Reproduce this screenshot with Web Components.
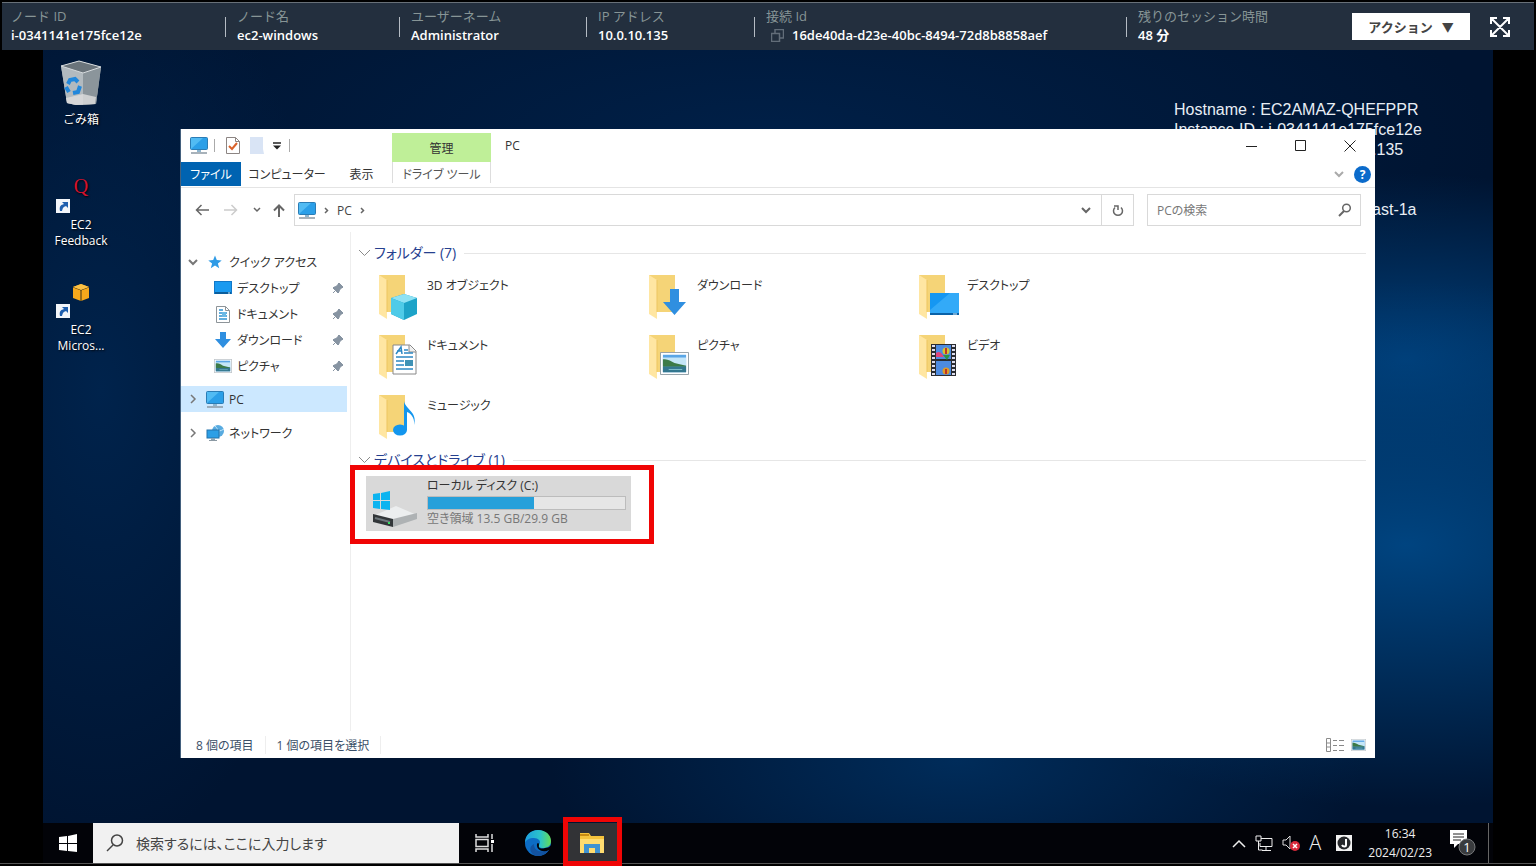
<!DOCTYPE html>
<html lang="ja">
<head>
<meta charset="utf-8">
<title>Fleet Manager - Remote Desktop</title>
<style>
    html, body { height: 100%; margin: 0; }
    body {
        background: #000;
        font-family: "Open Sans", "Noto Sans CJK JP", sans-serif;
        overflow: hidden;
    }
</style>
</head>
<body>
<remote-session>
    <session-bar slot="bar">
        <session-field label="ノード ID" style="flex-grow:214">i-0341141e175fce12e</session-field>
        <session-field label="ノード名" style="flex-grow:174">ec2-windows</session-field>
        <session-field label="ユーザーネーム" style="flex-grow:187">Administrator</session-field>
        <session-field label="IP アドレス" style="flex-grow:168">10.0.10.135</session-field>
        <session-field label="接続 Id" copy style="flex-grow:372">16de40da-d23e-40bc-8494-72d8b8858aef</session-field>
        <session-field label="残りのセッション時間" style="flex-grow:226">48 分</session-field>
    </session-bar>
    <desktop-area>
        <desktop-shortcut slot="icons" icon="recycle">ごみ箱</desktop-shortcut>
        <desktop-shortcut slot="icons" icon="feedback" linked>EC2 Feedback</desktop-shortcut>
        <desktop-shortcut slot="icons" icon="box" linked>EC2 Micros...</desktop-shortcut>
        <host-info slot="info"></host-info>
        <explorer-window slot="window"></explorer-window>
    </desktop-area>
    <task-bar slot="taskbar"></task-bar>
</remote-session>

<script>
// each entry: width, height, svg body
const PC = `<rect x=".5" y=".5" width="17" height="12" rx="1" fill="#2b9fe8" stroke="#2a7cb5"/>
    <path d="M1 12 13 1H1z" fill="#63c7f8" opacity=".7"/><path d="M7 13h4v2H7z" fill="#8fb6cf"/>
    <path d="M1 16h16" stroke="#8b99a3" stroke-width="1.5"/>`
const FOLDER = `<path d="M1 1h26v37H9z" fill="#f5d477"/><path d="M1 1l8 5v39l-8-5z" fill="#ffe6a2"/>
    <path d="M9 6v32" stroke="#edc560"/>`
const PICTURE = (x, y, w, h) => `<svg x="${x}" y="${y}" width="${w}" height="${h}" viewBox="0 0 30 25" preserveAspectRatio="none">
    <path d="M.5.5h29v24H.5z" fill="#fff" stroke="#8e9ba3"/><path d="M3 3h24v19H3z" fill="#5aa6e6"/>
    <path d="M3 6h24v9H3z" fill="#c4e6f8"/><path d="M3 8c5-1 8 2 12 4l12 3v1H3z" fill="#3c7a47"/><path d="M3 16h24v6H3z" fill="#33778f"/>
    <path d="M9 19h14" stroke="#83c1cf"/></svg>`

const ICONS = {
    pc: [18, 17, PC],
    star: [14, 14, `<path d="m7 .5 1.8 4.6 4.9.3-3.8 3 1.3 4.9L7 10.6l-4.2 2.7 1.3-4.9-3.8-3 4.9-.3z" fill="#2f9be6"/>`],
    desktop: [18, 14, `<rect x=".5" y=".5" width="17" height="12" fill="#1a9af0" stroke="#1278c8"/><path d="M1 12h16" stroke="#0b5e9c" stroke-width="2"/><path d="M14 12h2" stroke="#d5ecfb"/>`],
    document: [14, 17, `<path d="M.5.5h9l4 4v12H.5z" fill="#fff" stroke="#8d9499"/><path d="M9.500.5v4h4" fill="none" stroke="#8d9499"/>
        <path d="M3 4h4M3 7h8M3 10h8M3 13h8" stroke="#2e92d2" stroke-width="1.5"/><path d="M6 6h4v5H6z" fill="#6bb9e5"/>`],
    download: [18, 18, `<path d="M6 1h6v7h5l-8 9-8-9h5z" fill="#2f8fe0"/>`],
    picture: [18, 14, PICTURE(0, 0, 18, 14)],
    view: [15, 12, PICTURE(0, 0, 15, 12)],
    network: [19, 18, `<circle cx="12" cy="7" r="6" fill="#58abe0"/><path d="M9 2c3 3 5 7 3 11M7 7c4 1 8 0 11-2" fill="none" stroke="#c2e6fa"/>
        <rect x="1" y="6" width="12" height="8" fill="#2c9fe6" stroke="#2373ab"/><path d="M5 14h4v2H5z" fill="#8aa6b8"/><path d="M3 16.500h8" stroke="#8b99a3"/>`],
    pin: [12, 12, `<path d="m7 1 4 4-1 1-1 0-2 3 0 1-1 1-5-5 1-1 1 0 3-2 0-1zM3.500 8.500 1 11" fill="#8794a2" stroke="#8794a2"/>`],
    chevDown: [10, 7, `<path d="m1 1 4 4 4-4" fill="none" stroke="currentColor" stroke-width="2"/>`],
    chevTiny: [8, 6, `<path d="m1 1 3 3 3-3" fill="none" stroke="currentColor" stroke-width="1.5"/>`],
    chevRight: [7, 10, `<path d="m1 1 4 4-4 4" fill="none" stroke="currentColor" stroke-width="1.5"/>`],
    chevSmall: [5, 7, `<path d="m1 1 2.500 2.500L1 6" fill="none" stroke="currentColor" stroke-width="1.5"/>`],
    chevHead: [13, 8, `<path d="m1 1 5.500 5.500L12 1" fill="none" stroke="currentColor"/>`],
    chevUp: [14, 9, `<path d="m1 8 6-6 6 6" fill="none" stroke="currentColor" stroke-width="1.5"/>`],
    check: [14, 17, `<path d="M.5.5h9l4 4v12H.5z" fill="#fff" stroke="#8c8583"/><path d="M9.500.5v4h4" fill="none" stroke="#8c8583"/><path d="m3 9 3 3 5-6" fill="none" stroke="#d9622b" stroke-width="2"/>`],
    blank: [14, 17, `<path d="M0 0h13v12l1 5H0z" fill="#d9e4f5"/>`],
    custom: [8, 8, `<path d="M0 1h8" stroke="#222" stroke-width="1.5"/><path d="M0 3.500h8l-4 4z" fill="#222"/>`],
    back: [14, 12, `<path d="M14 6H1.500M6.500 1l-5 5 5 5" fill="none" stroke="currentColor" stroke-width="1.500"/>`],
    forward: [14, 12, `<path d="M0 6h12.500M7.500 1l5 5-5 5" fill="none" stroke="currentColor" stroke-width="1.500"/>`],
    up: [12, 13, `<path d="M6 13V1.500M1 6.500l5-5 5 5" fill="none" stroke="currentColor" stroke-width="2"/>`],
    refresh: [12, 13, `<path d="M3 3.500A4.500 4.500 0 1 0 9 3.500M2 2h4v4" fill="none" stroke="#666" stroke-width="1.500"/>`],
    search: [14, 14, `<circle cx="8.500" cy="5" r="3.800" fill="none" stroke="currentColor" stroke-width="1.500"/><path d="M6 8 1 13" stroke="currentColor" stroke-width="2"/>`],
    searchBig: [18, 18, `<circle cx="11" cy="6.500" r="5.500" fill="none" stroke="currentColor" stroke-width="1.500"/><path d="M7 11 1 17" stroke="currentColor" stroke-width="1.500"/>`],
    min: [12, 12, `<path d="M0 6.500h11" stroke="#222"/>`],
    max: [12, 12, `<path d="M.5.5h10v10H.5z" fill="none" stroke="#222"/>`],
    close: [12, 12, `<path d="m.5.5 11 11m0-11-11 11" stroke="#222"/>`],
    details: [18, 14, `<path d="M.5.5h4v13h-4zM0 5h5M0 9h5" fill="none" stroke="#8b8b8b"/><path d="M7 2.500h4m2 0h5M7 7.500h4m2 0h5M7 12.500h4m2 0h5" stroke="#888"/>`],
    copy: [13, 13, `<path d="M.5 4.500h8v8h-8zM4 4V.5h8.500V9H9" fill="none" stroke="#626d79" stroke-width="1.500"/>`],
    expand: [20, 20, `<path d="m2 2 16 16m0-16L2 18M7 1H1v6M13 1h6v6M7 19H1v-6M13 19h6v-6" fill="none" stroke="#fff" stroke-width="2"/>`],

    f3d: [46, 46, FOLDER + `<path d="m13 24 13-4 13 4v16l-13 6-13-6z" fill="#1da3c8"/><path d="m13 24 13-4 13 4-13 5z" fill="#8fe2f4"/><path d="M13 24v16l13 6V29z" fill="#4fcbe8"/>`],
    fdownload: [46, 46, FOLDER + `<path d="M22 15h9v13h7L26.500 41 15 28h7z" fill="#2f8fe0"/>`],
    fdesktop: [46, 46, FOLDER + `<path d="M12 19h29v22H12z" fill="#1597f2"/><path d="M12 36 32 19h9v22H12z" fill="#33aaf8"/><path d="M12 40h29" stroke="#0a62a8" stroke-width="2"/><path d="M35 40h4" stroke="#d5ecfb"/>`],
    fdocument: [46, 46, FOLDER + `<path d="M15 11h17l6 6v23H15z" fill="#fff" stroke="#888"/><path d="M31 11v7h7" fill="#eee" stroke="#888"/>
        <path d="m18 20 5-7 1 7m-5-3h5M26 16h4M26 19h9M18 23h17M18 27h8M18 31h8M18 35h17" fill="none" stroke="#2c88c4" stroke-width="1.500"/><path d="M27 26h8v6h-8z" fill="#3f92b5"/>`],
    fpicture: [46, 46, FOLDER + PICTURE(12, 18, 29, 23)],
    fvideo: [46, 46, FOLDER + `<path d="M13 10h25v32H13z" fill="#2a2c31"/><path d="M18 11h15v14H18zM18 27h15v14H18z" fill="#4d8be0"/>
        <path d="M15.500 11v31M35.500 11v31" stroke="#dde" stroke-width="3" stroke-dasharray="2 2"/><circle cx="28" cy="17" r="3.500" fill="#d8c32c"/><path d="M18 19c4-3 6 1 8 4h-8z" fill="#e0457c"/>
        <path d="M25 21h7l-3 5z" fill="#2c9445"/><circle cx="28" cy="37" r="3.500" fill="#dd9b26"/><path d="M27 14h2v6h-2zM27 35h2v5h-2z" fill="#bd3326"/>`],
    fmusic: [46, 46, FOLDER + `<ellipse cx="22" cy="36" rx="7" ry="5.500" fill="#1396ee"/><path d="M26 36V7c1 8 14 11 10 24 1-8-4-12-7-13v18z" fill="#1396ee"/>`],
    drive: [46, 38, `<path d="m1 26 23-10 21 9-24 11z" fill="#eceeef"/><path d="m21 29 24-6v6L21 37z" fill="#aeb2b4"/><path d="m1 24 20 5v8L1 32z" fill="#323639"/><path d="m3 28 15 4" stroke="#6d777c" stroke-width="2"/><path d="M16 32h2v2h-2z" fill="#34df62"/>
        <path d="m1 4 7-1v7H1zM9 3l9-2v9H9zM1 11h7v8l-7-1zM9 11h9v9l-9-1z" fill="#0db4f0"/>`],

    recycle: [42, 46, `<path d="m1 6 18-5 22 6-5 37-20 1-9-2z" fill="#a4adb3"/><path d="m1 6 22 7v32l-7 0-9-2z" fill="#b2babf"/><path d="m23 13 18-6-5 37-13 1z" fill="#8b959b"/>
        <path d="m1 6 18-5 22 6-18 6z" fill="#6a747b" stroke="#d5dadd"/><path d="m6 38 17-4 13 3-1 7-19 1-9-2z" fill="#dedede" opacity=".8"/>
        <path d="m8 24 2-4 5-1 3 3M20 26l-2 6-5 1M9 32l-3-5" fill="none" stroke="#2187db" stroke-width="4"/>`],
    feedback: [42, 46, `<text x="21" y="28" text-anchor="middle" font-family="Liberation Serif, serif" font-size="20" fill="#d4122e">Q</text>`],
    box: [42, 46, `<path d="m13 17 8-3 8 3v11l-8 3-8-3z" fill="#f6a81b"/><path d="m13 17 8 3 8-3M21 20v11" fill="none" stroke="#3c3219"/><path d="m13 17 8-3 8 3-8 3z" fill="#fbc043"/>`],
    shortcut: [14, 14, `<path d="M0 0h14v14H0z" fill="#f3f6fa"/><path d="M4 12c-1-5 1-6 4-7L6 3h6v6l-2-2c-3 1-3 2-4 5z" fill="#1f5fae"/>`],

    windows: [18, 18, `<path d="m0 3 8-1v7H0zM9 2l9-2v9H9zM0 10h8v7l-8-1zM9 10h9v8l-9-1z" fill="#fff"/>`],
    taskview: [19, 18, `<path d="M1 0v3h12V0M1 18v-3h12v3M1 5.500h12v7H1zM17 0v5m0 5v8" fill="none" stroke="#ddd" stroke-width="1.500"/><path d="M16 6h3v3h-3z" fill="#fff"/>`],
    edge: [26, 26, `<defs><linearGradient id="a" x1="0" x2="1"><stop stop-color="#1c9fe0"/><stop offset=".6" stop-color="#2cc4c8"/><stop offset="1" stop-color="#64dc55"/></linearGradient></defs>
        <circle cx="13" cy="13" r="13" fill="#0c6cc5"/><path d="M0 13C0 5 6 0 13 0c8 0 13 5 13 11 0 5-4 7-8 7-3 0-5-1-4-3 3-4-1-7-5-7-5 0-8 2-9 5z" fill="url(#a)"/>
        <path d="M9 14c0 7 6 9 15 6-3 4-7 6-11 6C6 26 2 17 9 14z" fill="#1252a0"/><path d="M14 15c-1 4 3 4 6 3 3 0 5-1 6-3v4l-2 1c-6 3-13 0-12-6 1-2 2-1 2 1z" fill="#020308"/>`],
    explorer: [24, 22, `<path d="M0 1h9l2 3h13v17H0z" fill="#f5c33c"/><path d="M0 7h24v14H0z" fill="#ffdc70"/><path d="M0 3h9" stroke="#c88b12" stroke-width="2"/>
        <path d="M4 21v-9h16v9h-5v-5H9v5z" fill="#3f93d2"/>`],
    lan: [18, 16, `<path d="M6 3.500h11v8H5V8M11 12v3M7 15.500h9M1 1h5v5H1zM3.500 6v9h4" fill="none" stroke="#eee"/>`],
    sound: [18, 16, `<path d="M1 5h3l4-4v13l-4-4H1z" fill="none" stroke="#ddd"/><circle cx="13" cy="11" r="5" fill="#d9293a"/><path d="m11 9 4 4m0-4-4 4" stroke="#fff" stroke-width="1.500"/>`],
    ime: [16, 16, `<path d="M0 0h16v16H0z" fill="#f2f2f2"/><circle cx="8" cy="8" r="6.500" fill="#26282b"/><path d="M10 4v6c0 2-3 2-4 0" fill="none" stroke="#fff" stroke-width="2"/>`],
    notice: [26, 26, `<path d="M0 0h17v14h-9l-4 4v-4H0z" fill="#fff"/><path d="M3 4h11M3 7h11M3 10h8" stroke="#222"/><circle cx="17" cy="17" r="8" fill="#393b3e" stroke="#77797b"/>
        <text x="17" y="22" text-anchor="middle" font-size="13" fill="#fff">1</text>`]
}

function define(name, build) {
    customElements.define(name, class extends HTMLElement {
        constructor() {
            super()
            this.attachShadow({mode: 'open'})
        }
        connectedCallback() {
            this.shadowRoot.innerHTML = build(this)
        }
    })
}

const BUTTON = 'button{font:inherit;color:inherit;background:none;border:0;padding:0;display:flex;align-items:center;justify-content:center}'

define('ui-icon', el => {
    const [w, h, body] = ICONS[el.getAttribute('name')]
    return `<style>:host{display:inline-flex;flex:none}svg{display:block}</style>
    <svg width="${w}" height="${h}" viewBox="0 0 ${w} ${h}" aria-hidden="true">${body}</svg>`
})

define('remote-session', () => `
<style>
    :host{display:flex;flex-direction:column;height:100%;box-sizing:border-box;padding-top:2px}
    .screen{flex:1;display:flex;flex-direction:column;margin:0 43px}
    .foot{height:2px;border-top:1px solid #555}
</style>
<slot name="bar"></slot>
<div class="screen"><slot></slot><slot name="taskbar"></slot></div>
<div class="foot"></div>`)

define('session-bar', () => `
<style>
    :host{display:flex;align-items:center;height:48px;box-sizing:border-box;margin:0 2px;background:#232f3e;border-top:1px solid #687078;
        color:#fff;padding-right:24px}
    .fields{display:flex;flex:1}
    ${BUTTON}
    .action{background:#fff;color:#444;width:118px;height:27px;font-size:13px;font-weight:600;gap:9px;margin-right:20px}
    .action span{font-size:12px}
</style>
<div class="fields"><slot></slot></div>
<button class="action">アクション <span>▼</span></button>
<button aria-label="全画面表示"><ui-icon name="expand"></ui-icon></button>`)

define('session-field', el => `
<style>
    :host{display:block;flex-basis:0;min-width:0;padding:0 0 0 9px;white-space:nowrap;font-size:13px;line-height:19px}
    :host(:not(:first-child)) .cell{border-left:1px solid #b5bcc4;padding-left:11px}
    :host(:not(:first-child)){padding-left:0}
    .cell{display:flex;flex-direction:column;height:20px;justify-content:center}
    .label{color:#879596}
    .value{display:flex;align-items:center;font-weight:600;padding-bottom:2px}
    .value button{background:none;border:0;padding:0 8px 0 5px;display:flex}
</style>
<div class="cell">
    <div class="label">${el.getAttribute('label')}</div>
    <div class="value">${el.hasAttribute('copy') ? '<button aria-label="コピー"><ui-icon name="copy"></ui-icon></button>' : ''}<slot></slot></div>
</div>`)

define('desktop-area', () => `
<style>
    :host{display:flex;flex:1;justify-content:space-between;position:relative;min-height:0;
        background:
            radial-gradient(ellipse 34% 34% at 94% 64%, #004480 0, transparent 100%),
            radial-gradient(ellipse 26% 24% at 94% 40%, #003e78 0, transparent 100%),
            radial-gradient(ellipse 28% 22% at 63% 92%, #002c5a 0, transparent 100%),
            radial-gradient(ellipse 16% 60% at 4% 44%, #00234c 0, transparent 100%),
            radial-gradient(ellipse 50% 30% at 50% 12%, #002048 0, transparent 100%),
            #001431}
    .icons{display:flex;flex-direction:column;gap:20px;width:76px;padding-top:10px}
    .info{width:319px;padding-top:50px}
    /* the open window floats over the wallpaper */
    .window{position:absolute;inset:79px 118px 65px 137px;display:flex}
</style>
<div class="icons"><slot name="icons"></slot></div>
<div class="info"><slot name="info"></slot></div>
<div class="window"><slot name="window"></slot></div>`)

define('desktop-shortcut', el => `
<style>
    :host{display:block;color:#fff;font-size:12px;line-height:16px;text-align:center;text-shadow:1px 1px 2px #000;min-height:85px}
    a{color:inherit;text-decoration:none;display:flex;flex-direction:column;align-items:center;gap:6px}
    .pic{position:relative;display:flex}
    /* shortcut arrow overlaps the corner of the picture */
    .arrow{position:absolute;left:-4px;bottom:-2px}
    .name{width:60px}
</style>
<a href="#"><span class="pic"><ui-icon name="${el.getAttribute('icon')}"></ui-icon>
    ${el.hasAttribute('linked') ? '<ui-icon class="arrow" name="shortcut"></ui-icon>' : ''}</span>
    <span class="name"><slot></slot></span></a>`)

define('host-info', () => `
<style>
    :host{display:block;color:#e8eef5;font:16px/20px "Liberation Sans",sans-serif;white-space:nowrap}
    div{min-height:20px}
</style>
<div>Hostname : EC2AMAZ-QHEFPPR</div>
<div>Instance ID : i-0341141e175fce12e</div>
<div>Private IP Address : 10.0.10.135</div>
<div></div><div></div>
<div>Availability Zone : ap-northeast-1a</div>`)

define('explorer-window', () => `
<style>
    :host{display:flex;flex-direction:column;flex:1;background:#fff;color:#333;font-size:12px;border:1px solid #43607d;
        border-width:0 0 0 1px;font-feature-settings:"palt"}
    .body{display:flex;flex:1;min-height:0}
</style>
<explorer-ribbon></explorer-ribbon>
<address-row></address-row>
<div class="body">
    <nav-pane></nav-pane>
    <file-pane></file-pane>
</div>
<status-row></status-row>`)

define('explorer-ribbon', () => `
<style>
    :host{display:flex;height:58px;border-bottom:1px solid #e4e4e4}
    ${BUTTON}
    .left{width:211px}
    .row{display:flex;align-items:center;height:33px}
    .qat{padding-left:9px}
    .sep{width:1px;height:13px;background:#aaa}
    .tabs{height:24px}
    .tabs button{height:24px}
    .file{background:#0063b1;color:#fff;width:60px}
    .computer{width:92px}
    .view{width:57px}
    .tool{width:99px;padding-top:4px}
    .tool div{background:#bfef98;height:29px;display:flex;align-items:center;justify-content:center}
    .tool button{width:100%;height:21px;padding-top:3px;border:solid #ddd;border-width:0 1px;color:#555}
    .right{flex:1}
    .title{padding-left:14px;justify-content:space-between}
    .wc{display:flex;gap:37px;padding-right:19px}
    .help{justify-content:flex-end;gap:10px;height:25px;padding-right:4px;color:#aaa}
    .q{background:#0b6bcb;border-radius:50%;width:17px;height:17px;color:#fff;font-weight:700}
</style>
<div class="left">
    <div class="row qat"><ui-icon name="pc"></ui-icon><span class="sep" style="margin:0 11px 0 6px"></span>
        <ui-icon name="check"></ui-icon><ui-icon name="blank" style="margin:0 9px 0 10px"></ui-icon>
        <button aria-label="カスタマイズ"><ui-icon name="custom"></ui-icon></button><span class="sep" style="margin-left:8px"></span></div>
    <div class="row tabs"><button class="file">ファイル</button><button class="computer">コンピューター</button><button class="view">表示</button></div>
</div>
<div class="tool"><div>管理</div><button>ドライブ ツール</button></div>
<div class="right">
    <div class="row title"><span>PC</span><span class="wc">
        <button aria-label="最小化"><ui-icon name="min"></ui-icon></button>
        <button aria-label="最大化"><ui-icon name="max"></ui-icon></button>
        <button aria-label="閉じる"><ui-icon name="close"></ui-icon></button></span></div>
    <div class="row help"><button aria-label="リボンの展開"><ui-icon name="chevDown"></ui-icon></button><button class="q">?</button></div>
</div>`)

define('address-row', () => `
<style>
    :host{display:flex;align-items:center;padding:6px 14px 6px 14px;height:32px;color:#666}
    ${BUTTON}
    .nav{display:flex;align-items:center;gap:15px;width:99px;flex:none}
    .nav button:last-child{margin-left:-3px}
    .box{display:flex;align-items:center;flex:1;height:30px;border:1px solid #d9d9d9;padding-left:3px}
    .crumb{display:flex;align-items:center;gap:8px;flex:1}
    .crumb a{color:#444;text-decoration:none}
    .refresh{width:32px;height:30px;border-left:1px solid #d9d9d9;margin-left:10px}
    .search{flex:none;width:212px;margin-left:13px;padding:0}
    input{flex:1;min-width:0;font:inherit;border:0;padding:0 0 0 9px;outline:0;background:none}
    input::placeholder{color:#777;opacity:1}
    .search button{padding-right:8px}
</style>
<div class="nav">
    <button aria-label="戻る"><ui-icon name="back"></ui-icon></button>
    <button aria-label="進む" style="color:#ccc"><ui-icon name="forward"></ui-icon></button>
    <button aria-label="履歴"><ui-icon name="chevTiny"></ui-icon></button>
    <button aria-label="上へ"><ui-icon name="up"></ui-icon></button>
</div>
<div class="box"><div class="crumb"><ui-icon name="pc"></ui-icon><ui-icon name="chevSmall"></ui-icon><a href="#">PC</a><ui-icon name="chevSmall"></ui-icon></div>
    <button aria-label="以前の場所"><ui-icon name="chevDown"></ui-icon></button>
    <button class="refresh" aria-label="更新"><ui-icon name="refresh"></ui-icon></button></div>
<div class="box search"><input aria-label="PCの検索" placeholder="PCの検索"><button aria-label="検索"><ui-icon name="search"></ui-icon></button></div>`)

define('nav-pane', () => `
<style>
    :host{display:block;width:170px;flex:none;padding-top:17px;box-sizing:border-box;border-right:1px solid #eee}
    nav-item[selected]{margin:7px 3px 8px 0}
</style>
<nav-item icon="star" open>クイック アクセス</nav-item>
<nav-item icon="desktop" pinned>デスクトップ</nav-item>
<nav-item icon="document" pinned>ドキュメント</nav-item>
<nav-item icon="download" pinned>ダウンロード</nav-item>
<nav-item icon="picture" pinned>ピクチャ</nav-item>
<nav-item icon="pc" selected>PC</nav-item>
<nav-item icon="network">ネットワーク</nav-item>`)

define('nav-item', el => `
<style>
    :host{display:block;height:26px;margin-right:3px}
    :host([selected]){background:#cce8ff}
    a{display:flex;align-items:center;height:100%;color:#333;text-decoration:none}
    .exp{width:24px;display:flex;justify-content:center;color:#777}
    :host([pinned]) .exp{width:32px}
    .pic{width:20px;display:flex;justify-content:center;margin-right:4px}
    .text{flex:1;white-space:nowrap}
    .pin{margin-right:3px}
</style>
<a href="#"><span class="exp">${el.hasAttribute('pinned') ? '' : `<ui-icon name="${el.hasAttribute('open') ? 'chevDown' : 'chevRight'}"></ui-icon>`}</span>
    <span class="pic"><ui-icon name="${el.getAttribute('icon')}"></ui-icon></span>
    <span class="text"><slot></slot></span>${el.hasAttribute('pinned') ? '<ui-icon class="pin" name="pin"></ui-icon>' : ''}</a>`)

define('file-pane', () => `
<style>
    :host{display:block;flex:1;padding:11px 9px 0 7px;min-width:0}
    .grid{display:grid;grid-template-columns:repeat(auto-fill,270px);grid-auto-rows:46px;row-gap:14px;padding:11px 0 10px 8px}
    .drive{padding:6px 0 0 8px;display:flex}
</style>
<file-group>フォルダー (7)</file-group>
<div class="grid">
    <file-item icon="f3d">3D オブジェクト</file-item>
    <file-item icon="fdownload">ダウンロード</file-item>
    <file-item icon="fdesktop">デスクトップ</file-item>
    <file-item icon="fdocument">ドキュメント</file-item>
    <file-item icon="fpicture">ピクチャ</file-item>
    <file-item icon="fvideo">ビデオ</file-item>
    <file-item icon="fmusic">ミュージック</file-item>
</div>
<file-group>デバイスとドライブ (1)</file-group>
<div class="drive"><drive-item></drive-item></div>`)

define('file-group', () => `
<style>
    :host{display:flex;align-items:center;height:20px;gap:3px;color:#8a8a8a}
    h2{font-size:14px;font-weight:400;color:#26408f;margin:0 5px 0 0;line-height:20px;white-space:nowrap}
    .line{flex:1;height:1px;background:#e6e6e6}
</style>
<ui-icon name="chevHead"></ui-icon><h2><slot></slot></h2><span class="line"></span>`)

define('file-item', el => `
<style>
    :host{display:flex;padding-left:12px;gap:3px}
    .name{padding-top:2px;line-height:20px}
</style>
<ui-icon name="${el.getAttribute('icon')}"></ui-icon><span class="name"><slot></slot></span>`)

define('drive-item', () => `
<style>
    :host{display:flex;position:relative;background:#d9d9d9;width:265px;height:55px;line-height:16px;box-sizing:border-box;padding:2px 5px 0 6px;gap:9px}
    ui-icon{padding-top:12px}
    .info{flex:1}
    .bar{border:1px solid #bcbcbc;background:#e6e6e6;height:12px;margin:2px 0 1px}
    .used{background:#26a0da;width:54%;height:100%}
    .free{color:#777}
    /* red frame drawn over the pane around the tile */
    .mark{position:absolute;inset:-11px -23px -13px -16px;border:5px solid #f00505;pointer-events:none}
</style>
<ui-icon name="drive"></ui-icon>
<div class="info">
    <div>ローカル ディスク (C:)</div>
    <div class="bar" role="meter" aria-label="使用領域" aria-valuenow="54"><div class="used"></div></div>
    <div class="free">空き領域 13.5 GB/29.9 GB</div>
</div>
<span class="mark"></span>`)

define('status-row', () => `
<style>
    :host{display:flex;align-items:center;height:27px;color:#3b5068;padding:0 9px 0 15px}
    span{padding-right:11px;margin-right:11px;border-right:1px solid #eee}
    .gap{flex:1}
    ${BUTTON}
    button{margin-left:7px}
</style>
<span>8 個の項目</span><span>1 個の項目を選択</span><div class="gap"></div>
<button aria-label="詳細"><ui-icon name="details"></ui-icon></button>
<button aria-label="大アイコン"><ui-icon name="view"></ui-icon></button>`)

define('task-bar', () => `
<style>
    :host{display:flex;align-items:stretch;height:40px;background:#020308;color:#eee}
    ${BUTTON}
    .start{width:50px}
    .search{display:flex;align-items:center;width:366px;background:#f1f1f1;color:#444;box-sizing:border-box;padding-left:13px;gap:12px}
    input{flex:1;border:0;background:none;font:14px "Noto Sans CJK JP",sans-serif;font-feature-settings:"palt";padding:0;outline:0}
    input::placeholder{color:#444;opacity:1}
    .app{width:58px}
    .task{width:50px}
    .active{position:relative;background:#323336;width:50px}
    .active::after{content:"";position:absolute;inset:-6px -5px -3px -4px;border:5px solid #f00505}
    .tray{display:flex;align-items:center;margin-left:auto;gap:9px}
    .a{font-size:20px;font-weight:300;line-height:20px}
    .clock{font-size:12px;line-height:19px;text-align:center;margin:0 9px 0 7px}
    .peek{border-left:1px solid #666;width:4px;height:40px;margin-left:3px}
</style>
<button class="start" aria-label="スタート"><ui-icon name="windows"></ui-icon></button>
<label class="search"><ui-icon name="searchBig"></ui-icon><input aria-label="検索" placeholder="検索するには、ここに入力します"></label>
<button class="task" aria-label="タスク ビュー"><ui-icon name="taskview"></ui-icon></button>
<button class="app" aria-label="Microsoft Edge"><ui-icon name="edge"></ui-icon></button>
<button class="active" aria-label="エクスプローラー"><ui-icon name="explorer"></ui-icon></button>
<div class="tray">
    <button aria-label="隠れているインジケーター"><ui-icon name="chevUp"></ui-icon></button>
    <ui-icon name="lan"></ui-icon><ui-icon name="sound"></ui-icon><span class="a">A</span><ui-icon name="ime" style="margin-left:6px"></ui-icon>
    <div class="clock">16:34<br>2024/02/23</div>
    <button aria-label="通知"><ui-icon name="notice"></ui-icon></button>
    <span class="peek"></span>
</div>`)
</script>
</body>
</html>
